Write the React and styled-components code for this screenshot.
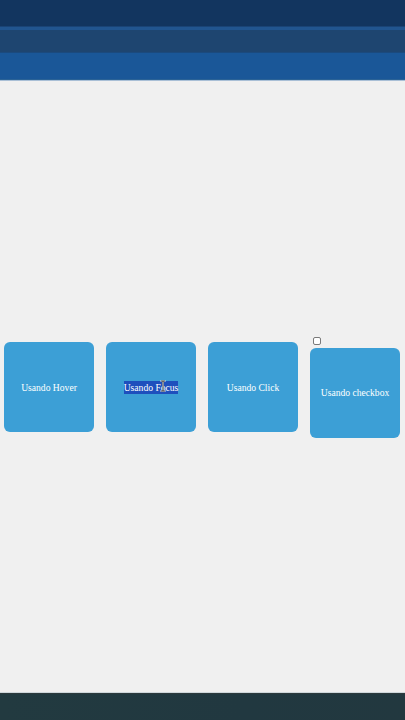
import React from "react";
import styled, { createGlobalStyle } from "styled-components";

const Global = createGlobalStyle`
  html, body { margin: 0; padding: 0; }
  body {
    background: #f0f0f0;
    font-family: "Liberation Serif", "Times New Roman", serif;
  }
`;

const Page = styled.div`
  height: 720px;
  display: flex;
  flex-direction: column;
`;

const Header = styled.header`
  flex: 0 0 80px;
  display: flex;
  flex-direction: column;
  border-bottom: 1px solid #a9bfd6;
`;

const Band = styled.div`
  height: ${p => p.h}px;
  background: ${p => p.bg};
  border-bottom: ${p => (p.line ? `1px solid ${p.line}` : "none")};
`;

const Main = styled.main`
  flex: 1;
  display: flex;
  align-items: center;
  gap: 12px;
  padding: 0 4px;
`;

const Card = styled.div`
  width: 90px;
  height: 90px;
  flex: 0 0 90px;
  background: #3c9fd6;
  border-radius: 6px;
  display: flex;
  align-items: center;
  justify-content: center;
  color: #fff;
  font-size: 9.6px;
  position: relative;
`;

const Selected = styled.span`
  background: #1e4fbd;
  padding: 1px 0;
`;

const Cursor = styled.svg`
  position: absolute;
  left: 54px;
  top: 38px;
`;

const Stack = styled.div`
  display: flex;
  flex-direction: column;
  align-items: flex-start;
  gap: 3px;
`;

const Check = styled.input`
  appearance: none;
  width: 8px;
  height: 8px;
  margin: 0 0 0 3px;
  border: 1px solid #7a7a7a;
  border-radius: 2px;
  background: #fff;
`;

const Footer = styled.footer`
  flex: 0 0 26px;
  background: linear-gradient(90deg, #223a40, #213840 60%, #22383f);
  border-top: 1px solid #2d3a3d;
  box-shadow: 0 -1px 0 #cfd8dc;
`;

export default function App() {
  return (
    <Page>
      <Global />
      <Header>
        <Band h={26} bg="#12355f" line="#1a4476" />
        <Band h={3} bg="#21558f" />
        <Band h={22} bg="#1e4570" line="#1b4a7e" />
        <Band h={26} bg="#1a5798" line="#2a6296" />
      </Header>
      <Main>
        <Card>Usando Hover</Card>
        <Card>
          <Selected>Usando Focus</Selected>
          <Cursor width="6" height="12" viewBox="0 0 6 12">
            <path d="M0.5 1h5M3 1v10M0.5 11h5" stroke="#fff" strokeWidth="1.6" fill="none" />
            <path d="M1 1h4M3 1v10M1 11h4" stroke="#111" strokeWidth="0.8" fill="none" />
          </Cursor>
        </Card>
        <Card>Usando Click</Card>
        <Stack>
          <Check type="checkbox" />
          <Card>Usando checkbox</Card>
        </Stack>
      </Main>
      <Footer />
    </Page>
  );
}
